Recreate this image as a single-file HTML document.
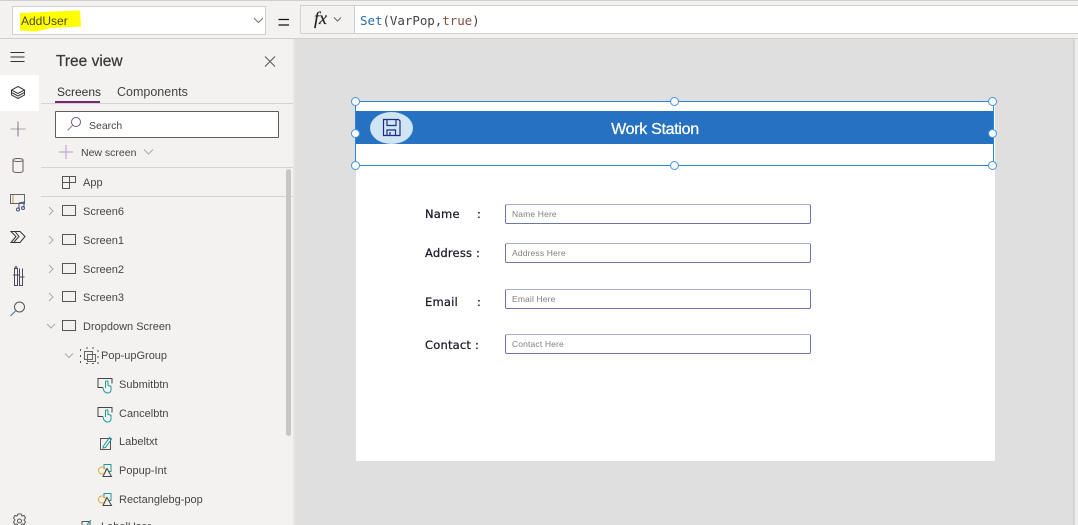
<!DOCTYPE html>
<html><head><meta charset="utf-8"><style>
html,body{margin:0;padding:0;width:1078px;height:525px;overflow:hidden}
#r{position:absolute;left:0;top:0;width:1078px;height:525px;overflow:hidden;background:#dfdfdf;font-family:"Liberation Sans",sans-serif}
.a{position:absolute}
.t{position:absolute;font-size:11px;color:#484644;line-height:14px;white-space:nowrap}
.l{position:absolute;font-family:"DejaVu Sans",sans-serif;font-size:11.5px;color:#1c1c2a;line-height:14px;white-space:pre;letter-spacing:.2px;-webkit-text-stroke:.25px #1c1c2a}
.i{position:absolute;left:505px;width:304px;height:18px;border:1px solid #6d75b0;border-radius:2px;background:#fff;font-size:8.5px;line-height:19px;color:#84807c;text-indent:6px;letter-spacing:.15px;font-family:"Liberation Sans",sans-serif;border-top-color:#a8acd0}
.h{position:absolute;width:7px;height:7px;border:1.5px solid #3f94dd;border-radius:50%;background:#fff}
svg{position:absolute;overflow:visible;fill:none}
</style></head><body><div id="r">
<!-- top bar -->
<div class="a" style="left:0;top:0;width:1078px;height:39px;background:#f3f2f1;border-bottom:1px solid #d2d0ce;box-sizing:border-box"></div>
<div class="a" style="left:0;top:0;width:1078px;height:1px;background:#d2d0ce"></div>
<div class="a" style="left:12px;top:6px;width:254px;height:29px;background:#fff;border:1px solid #d2d0ce;box-sizing:border-box"></div>
<svg style="left:0;top:0" width="100" height="40"><path d="M20 13l60-2.500 1 16-30 1.500-15 3.500-16-1z" fill="#ffff00"/></svg>
<div class="t" style="left:21px;top:14px;font-size:12px;color:#4a4a20">AddUser</div>
<svg style="left:0;top:0" width="300" height="40"><path d="M254 18l4.500 4.500 4.500-4.500" stroke="#777" stroke-width="1"/><path d="M278.500 19.500h10.500M278.500 25h10.500" stroke="#111" stroke-width="1.300"/></svg>
<div class="a" style="left:300px;top:5px;width:55px;height:29px;background:#f3f2f1;border:1px solid #d2d0ce;box-sizing:border-box"></div>
<div class="a" style="left:354px;top:5px;width:724px;height:29px;background:#fff;border:1px solid #d2d0ce;box-sizing:border-box;border-right:0"></div>
<div class="a" style="left:314px;top:8px;font-family:'Liberation Serif',serif;font-style:italic;font-size:18px;color:#222;line-height:20px;-webkit-text-stroke:.2px #222">fx</div>
<svg style="left:0;top:0" width="350" height="40"><path d="M334 17.500l3.500 3.500 3.500-3.500" stroke="#666"/></svg>
<div class="a" style="left:360px;top:13px;font-family:'DejaVu Sans Mono','Liberation Mono',monospace;font-size:12.500px;line-height:15px;white-space:pre;color:#444;letter-spacing:-.05px"><span style="color:#2b6da8">Set</span>(VarPop,<span style="color:#7a5040">true</span>)</div>

<!-- left rail -->
<div class="a" style="left:0;top:39px;width:41px;height:486px;background:#f3f2f1;border-right:1px solid #d8d6d4;box-sizing:content-box"></div>
<div class="a" style="left:0;top:75px;width:39px;height:36px;background:#fff"></div>
<svg style="left:0;top:39px" width="41" height="486" stroke="#3c3c3c" stroke-width="1">
<path d="M10.500 13.500h14M10.500 18h14M10.500 22.500h14" stroke="#333"/>
<path d="M18 47.500l6.500 3.500-6.500 3.500-6.500-3.500zM11.500 53.500l6.500 3.500 6.500-3.500M11.500 51v5l6.500 3.500 6.500-3.500v-5"/>
<path d="M10.500 90h15" stroke="#a8a4a8"/><path d="M18 82.500v15" stroke="#8a6a8a"/>
<path d="M13 121c0-2 10-2 10 0v11c0 2-10 2-10 0zM13 121c0 2 10 2 10 0" stroke="#6a5a55"/>
<path d="M10.500 155.500h14v9h-14z" stroke="#666"/><path d="M13 156v8" stroke="#c8954a"/><path d="M19 170v-6l5-1v6" stroke="#46507a"/><circle cx="18" cy="170.500" r="1.500" stroke="#46507a"/><circle cx="23" cy="169" r="1.500" stroke="#46507a"/>
<path d="M11 192.500h9l5 5-5 6h-9l5-6zM14 203l5-5.500-4-5" stroke="#333"/>
<path d="M14.500 229.500h3v17h-3zM19.500 229.500v17h3v-17M13 236h6M19 238h5.500M14.500 229.500l1.500-2 1.500 2" stroke="#4a4a5a"/>
<circle cx="19.500" cy="268" r="5" stroke="#555"/><path d="M15.500 272l-5 5" stroke="#4a6a9a"/>
<path d="M17 476l1-2h3l1 2 2-.5 1.500 2.500-1.500 2 1.500 2-1.500 2.500-2-.5-1 2h-3l-1-2-2 .5-1.500-2.500 1.500-2-1.500-2 1.500-2.500z" stroke="#555" transform="translate(0 1)"/><circle cx="19.500" cy="482" r="2" stroke="#555"/>
</svg>

<!-- tree panel -->
<div class="a" style="left:41px;top:39px;width:252px;height:486px;background:#f3f2f1"></div>
<div class="a" style="left:293px;top:39px;width:2px;height:486px;background:#e6e6e6"></div>
<div class="t" style="left:56px;top:53px;font-size:15.500px;line-height:18px;font-weight:400;color:#3c3a39;-webkit-text-stroke:.25px #3c3a39">Tree view</div>
<svg style="left:0;top:0" width="300" height="60"><path d="M265 56l10 10M275 56l-10 10" stroke="#555" transform="translate(0 .5)"/></svg>
<div class="t" style="left:57px;top:85px;font-size:12px;line-height:15px;color:#333">Screens</div>
<div class="t" style="left:117px;top:85px;font-size:12.500px;line-height:15px;color:#444">Components</div>
<div class="a" style="left:55px;top:101px;width:45px;height:2px;background:#742774"></div>
<div class="a" style="left:41px;top:103px;width:252px;height:1px;background:#d6d4d2"></div>
<div class="a" style="left:55px;top:111px;width:224px;height:27px;background:#fff;border:1px solid #605e5c;box-sizing:border-box;border-radius:1px"></div>
<svg style="left:0;top:0" width="300" height="170"><circle cx="76" cy="122" r="4.500" stroke="#6a5a80"/><path d="M72.500 125.500l-5 5" stroke="#b06a80"/><path d="M59 152h14M66 145v14" stroke="#c8a8cc" stroke-width="1.300"/><path d="M144 149.500l4.500 4.500 4.500-4.500" stroke="#aaa"/></svg>
<div class="t" style="left:89px;top:119px;font-size:10.500px">Search</div>
<div class="t" style="left:81px;top:146px;font-size:10.500px">New screen</div>
<div class="a" style="left:41px;top:167px;width:252px;height:1px;background:#d6d4d2"></div>
<div class="a" style="left:41px;top:196px;width:252px;height:1px;background:#d6d4d2"></div>
<div class="a" style="left:286px;top:169px;width:5px;height:267px;background:#c8c6c4;border-radius:3px"></div>

<div class="t" style="left:83px;top:176px">App</div>
<div class="t" style="left:83px;top:205px">Screen6</div>
<div class="t" style="left:83px;top:234px">Screen1</div>
<div class="t" style="left:83px;top:263px">Screen2</div>
<div class="t" style="left:83px;top:291px">Screen3</div>
<div class="t" style="left:83px;top:320px">Dropdown Screen</div>
<div class="t" style="left:101px;top:349px">Pop-upGroup</div>
<div class="t" style="left:119px;top:378px">Submitbtn</div>
<div class="t" style="left:119px;top:407px">Cancelbtn</div>
<div class="t" style="left:119px;top:435px">Labeltxt</div>
<div class="t" style="left:119px;top:464px">Popup-Int</div>
<div class="t" style="left:119px;top:493px">Rectanglebg-pop</div>
<div class="t" style="left:101px;top:520px">LabelUser</div>

<svg style="left:0;top:0" width="300" height="525" stroke="#555">
<path d="M62.500 176.500h7v12h-7zM62.500 182.500h13v-6h-6" stroke="#555"/>
<g stroke="#aaa"><path d="M49 207l4 4-4 4M49 236l4 4-4 4M49 265l4 4-4 4M49 293l4 4-4 4M47 324l4 4 4-4M65 353.500l4 4 4-4"/></g>
<path d="M62.500 205.500h13v10h-13zM62.500 234.500h13v10h-13zM62.500 263.500h13v10h-13zM62.500 291.500h13v10h-13zM62.500 320.500h13v10h-13z" stroke="#555"/>
<path d="M84.500 351.500h8v8h-8zM87.500 354.500h8v7h-8z" stroke="#666"/>
<path d="M80.500 349v2M80.500 355v2M80.500 361v2M86 348h2M92 348h2M98 350v2M98 356v2M98 362v2M86 363.500h2M92 363.500h2" stroke="#555"/>
<g id="b"><path d="M103 387.500h-5v-9h14v5" stroke="#444"/><path d="M105.500 388v-6c0-1.500 2.500-1.500 2.500 0v3.500l3 .8v3.200c0 2.500-1.500 3.500-3.500 3.500s-3-1-4-3l-.5-2.500" stroke="#1a9a9a"/></g>
<use href="#b" y="29"/>
<path d="M100.500 438.500h10v11h-10z" stroke="#555"/><path d="M103.500 446l6-8.500 2 1.500-6 8.500-2.500.5z" stroke="#1a9a9a"/>
<g id="c"><path d="M104 469v-4.500h7v7h-2" stroke="#1a9a9a"/><circle cx="102" cy="470.500" r="3.500" stroke="#e8a838"/><path d="M107 468.500l4.500 8h-8.500z" stroke="#444"/></g>
<use href="#c" y="29"/>
<path d="M82 521.500h8v6h-8z" stroke="#555"/><path d="M86 526l5-6" stroke="#1a9a9a"/>
</svg>

<!-- canvas -->
<div class="a" style="left:356px;top:101px;width:639px;height:360px;background:#fff"></div>
<div class="a" style="left:356px;top:111px;width:637px;height:33px;background:#2771c2"></div>
<div class="a" style="left:370px;top:112px;width:43px;height:32px;border-radius:50%;background:#cfe4f4"></div>
<svg style="left:0;top:0" width="420" height="145" stroke="#1e2f80" stroke-width="1.200"><path d="M383.500 119.500h15l1.500 1.500v14.500h-16.500zM387 119.500v6h9v-6M387 135.500v-5.500h8.500v5.500M390 135v-3"/></svg>
<div class="a" style="left:560px;top:120px;width:190px;text-align:center;font-size:16px;line-height:19px;color:#fff;letter-spacing:-.3px;-webkit-text-stroke:.25px #fff">Work Station</div>

<div class="l" style="left:425px;top:207px">Name</div><div class="l" style="left:477px;top:207px">:</div>
<div class="l" style="left:425px;top:246px">Address :</div>
<div class="l" style="left:425px;top:295px">Email</div><div class="l" style="left:477px;top:295px">:</div>
<div class="l" style="left:425px;top:338px">Contact :</div>
<div class="i" style="top:204px">Name Here</div>
<div class="i" style="top:243px">Address Here</div>
<div class="i" style="top:289px">Email Here</div>
<div class="i" style="top:334px">Contact Here</div>

<!-- selection -->
<div class="a" style="left:355px;top:101px;width:639px;height:65px;border:1px solid #2a86d8;box-sizing:border-box"></div>
<div class="h" style="left:351px;top:97px"></div>
<div class="h" style="left:670px;top:97px"></div>
<div class="h" style="left:988px;top:97px"></div>
<div class="h" style="left:351px;top:129px"></div>
<div class="h" style="left:988px;top:129px"></div>
<div class="h" style="left:351px;top:161px"></div>
<div class="h" style="left:670px;top:161px"></div>
<div class="h" style="left:988px;top:161px"></div>

<div class="a" style="left:1073px;top:39px;width:2px;height:486px;background:#d4d4d4"></div>
<div class="a" style="left:1075px;top:39px;width:3px;height:486px;background:#f0f0f0"></div>
</div></body></html>
